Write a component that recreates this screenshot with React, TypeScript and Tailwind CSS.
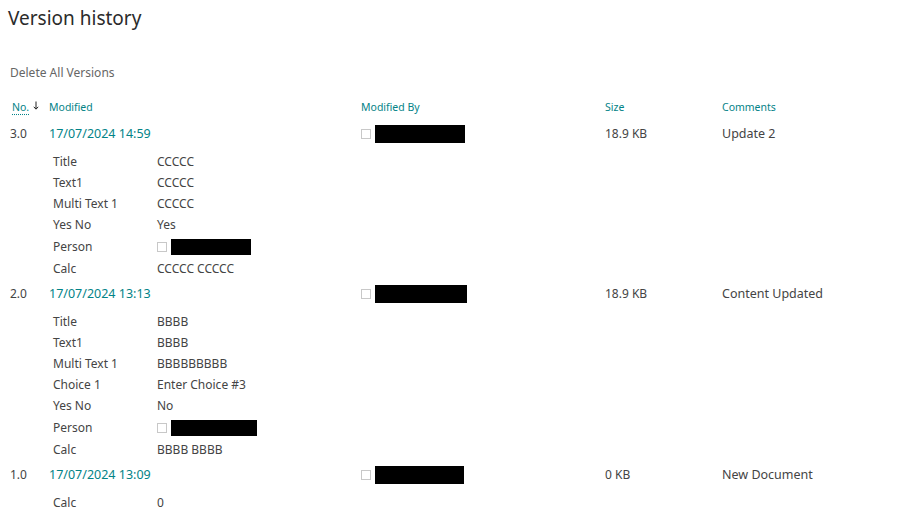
import React from "react";

type Field = { label: string; value?: string; person?: number };
type Version = {
  no: string;
  modified: string;
  byWidth: number;
  size: string;
  comment: string;
  fields: Field[];
};

const versions: Version[] = [
  {
    no: "3.0",
    modified: "17/07/2024 14:59",
    byWidth: 90,
    size: "18.9 KB",
    comment: "Update 2",
    fields: [
      { label: "Title", value: "CCCCC" },
      { label: "Text1", value: "CCCCC" },
      { label: "Multi Text 1", value: "CCCCC" },
      { label: "Yes No", value: "Yes" },
      { label: "Person", person: 80 },
      { label: "Calc", value: "CCCCC CCCCC" },
    ],
  },
  {
    no: "2.0",
    modified: "17/07/2024 13:13",
    byWidth: 92,
    size: "18.9 KB",
    comment: "Content Updated",
    fields: [
      { label: "Title", value: "BBBB" },
      { label: "Text1", value: "BBBB" },
      { label: "Multi Text 1", value: "BBBBBBBBB" },
      { label: "Choice 1", value: "Enter Choice #3" },
      { label: "Yes No", value: "No" },
      { label: "Person", person: 86 },
      { label: "Calc", value: "BBBB BBBB" },
    ],
  },
  {
    no: "1.0",
    modified: "17/07/2024 13:09",
    byWidth: 89,
    size: "0 KB",
    comment: "New Document",
    fields: [{ label: "Calc", value: "0" }],
  },
];

function UserChip({ width, tall }: { width: number; tall?: boolean }) {
  return (
    <div className="flex items-center gap-[4px]">
      <span className="block h-[10px] w-[10px] border border-[#c8c8c8] bg-white" />
      <span
        className={tall ? "block h-[18px] bg-black" : "block h-[16px] bg-black"}
        style={{ width }}
      />
    </div>
  );
}

export default function App() {
  return (
    <div
      className="min-h-[531px] w-[897px] bg-white text-[#444]"
      style={{ fontFamily: '"Segoe UI", "Noto Sans", "Open Sans", sans-serif' }}
    >
      <div className="h-[38px] pl-[8px] pt-[4px] text-[19px] leading-[28px] font-normal text-[#2b2b2b]">
        Version history
      </div>

      <div className="mt-[25px] h-[20px] pl-[10px] text-[12px] leading-[20px] text-[#666]">
        Delete All Versions
      </div>

      <div className="mt-[14px] grid h-[20px] grid-cols-[39px_312px_244px_117px_1fr] pl-[10px] text-[10.5px] leading-[20px] text-[#038387]">
        <div className="flex items-center gap-[3px] pl-[2px]">
          <span className="underline decoration-dotted underline-offset-[3px]">No.</span>
          <svg width="6" height="9" viewBox="0 0 6 9" className="mb-[3px] ml-[1px]">
            <path d="M3 0.5V8M0.8 5.8L3 8.2L5.2 5.8" stroke="#222" strokeWidth="1" fill="none" />
          </svg>
        </div>
        <div>Modified</div>
        <div>Modified By</div>
        <div>Size</div>
        <div>Comments</div>
      </div>

      <div className="mt-[4px]">
        {versions.map((v) => (
          <div key={v.no} className="pb-[2px]">
            <div className="grid h-[26px] grid-cols-[39px_312px_244px_117px_1fr] items-center pl-[10px] text-[12px]">
              <div className="text-[#444]">{v.no}</div>
              <div className="pt-[1px] text-[12.5px] text-[#038387]">{v.modified}</div>
              <UserChip width={v.byWidth} tall />
              <div>{v.size}</div>
              <div className="text-[12.5px]">{v.comment}</div>
            </div>
            <div className="mt-[4px] pl-[53px] text-[12px]">
              {v.fields.map((f) => (
                <div
                  key={f.label}
                  className={
                    f.person
                      ? "grid h-[23px] grid-cols-[104px_1fr] items-center"
                      : "grid h-[21px] grid-cols-[104px_1fr] items-center"
                  }
                >
                  <div>{f.label}</div>
                  {f.person ? <UserChip width={f.person} /> : <div>{f.value}</div>}
                </div>
              ))}
            </div>
          </div>
        ))}
      </div>
    </div>
  );
}
